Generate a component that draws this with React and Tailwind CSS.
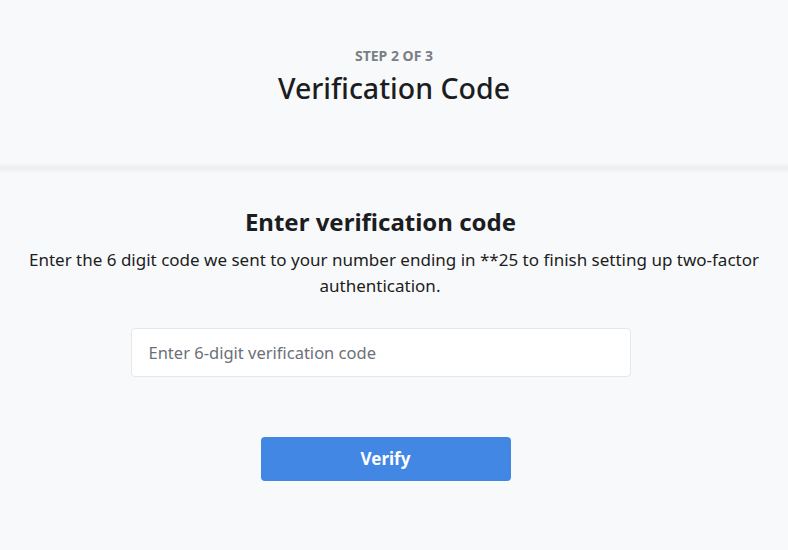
export default function App() {
  return (
    <div className="min-h-[550px] bg-[#f8f9fb] font-['Noto_Sans',sans-serif] text-[#1c1d21]">
      <header className="flex h-[163px] flex-col items-center pt-[46px]">
        <div className="text-[14px] font-bold uppercase leading-[20px] text-[#7a7e85]">Step 2 of 3</div>
        <h1 className="mt-[3px] text-[28.5px] font-medium leading-[38px]">Verification Code</h1>
      </header>
      <div className="h-[10px] bg-[linear-gradient(to_bottom,#f8f9fb,#edeef0_50%,#f8f9fb)]" />

      <main className="flex flex-col items-center px-4 pt-[32px]">
        <h2 className="mr-[27px] text-[24px] font-bold leading-[34px]">Enter verification code</h2>
        <p className="mt-[8px] max-w-[760px] text-center text-[17px] leading-[26px]">
          Enter the 6 digit code we sent to your number ending in **25 to finish setting up two-factor authentication.
          <span className="inline-block w-[28px]" />
        </p>
        <input
          type="text"
          placeholder="Enter 6-digit verification code"
          className="mt-[29px] mr-[27px] h-[49px] w-[500px] rounded-[4px] border border-[#e4e7eb] bg-white px-[17px] text-[16.5px] text-[#1c1d21] outline-none placeholder:text-[#6b7078]"
        />
        <button className="mt-[60px] mr-[17px] h-[44px] w-[250px] rounded-[4px] bg-[#4387e4] text-[17px] font-bold text-white">
          Verify
        </button>
      </main>
    </div>
  )
}
